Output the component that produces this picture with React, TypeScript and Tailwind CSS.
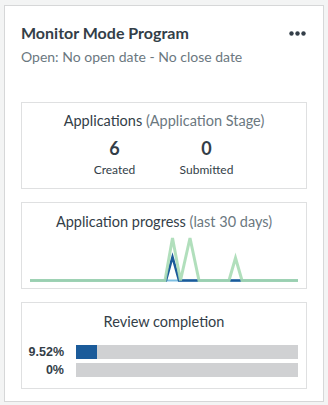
import React from 'react';

const font = { fontFamily: 'Lato, "Open Sans", sans-serif' };

const Dots = () => (
  <svg width="17" height="5" viewBox="0 0 17 5" fill="#333e48">
    <circle cx="2.5" cy="2.5" r="2.2" />
    <circle cx="8.5" cy="2.5" r="2.2" />
    <circle cx="14.5" cy="2.5" r="2.2" />
  </svg>
);

const ProgressChart = () => (
  <svg width="268" height="47" viewBox="0 0 268 47" fill="none">
    <line x1="0" y1="44.5" x2="268" y2="44.5" stroke="#7ebfe2" strokeWidth="2" />
    <polyline
      points="0,44.5 136,44.5 142.5,21 149,44.5 268,44.5"
      stroke="#1b5b9a"
      strokeWidth="2.5"
      strokeLinejoin="miter"
    />
    <polyline
      points="0,44.5 135,44.5 142.5,2 150.5,44.5 160,2 169,44.5 199,44.5 205.5,22 212,44.5 268,44.5"
      stroke="#a8dcb5"
      strokeOpacity="0.9"
      strokeWidth="3"
      strokeLinejoin="miter"
    />
  </svg>
);

const Bar = ({ label, pct }: { label: string; pct: number }) => (
  <div className="flex items-center gap-[12px]">
    <span
      className="w-[42px] text-right text-[12.5px] font-bold leading-none text-[#333e48]"
      style={{ fontFamily: '"Liberation Sans", Arial, sans-serif' }}
    >
      {label}
    </span>
    <div className="h-[14px] flex-1 bg-[#d0d1d3]">
      <div className="h-full bg-[#1b5b9a]" style={{ width: `${pct}%` }} />
    </div>
  </div>
);

export default function App() {
  return (
    <div className="min-h-[405px] bg-[#f3f4f4] pl-[4px] pt-[5px]" style={font}>
      <div className="w-[320px] h-[397px] border border-[#d6d7d8] bg-white px-[16px] pt-[17px]">
        <div className="flex items-start justify-between">
          <h1 className="text-[16px] font-bold leading-[20px] text-[#333e48]">Monitor Mode Program</h1>
          <div className="pt-[8px] pr-[1px]">
            <Dots />
          </div>
        </div>
        <p className="mt-[5px] text-[14px] leading-[18px] text-[#6b787f]">Open: No open date - No close date</p>

        <div className="mt-[36px] flex flex-col gap-[13px]">
          <div className="h-[87px] border border-[#dfe0e1] pt-[9px] text-center">
            <p className="text-[14.5px] leading-[18px] text-[#333e48]">
              Applications <span className="text-[#6b787f]">(Application Stage)</span>
            </p>
            <div className="mt-[8px] flex justify-center gap-[36px] pr-[7px]">
              <div className="flex w-[56px] flex-col items-center">
                <span className="text-[18px] font-bold leading-[20px] text-[#333e48]">6</span>
                <span className="mt-[5px] text-[12px] leading-[14px] text-[#333e48]">Created</span>
              </div>
              <div className="flex w-[56px] flex-col items-center">
                <span className="text-[18px] font-bold leading-[20px] text-[#333e48]">0</span>
                <span className="mt-[5px] text-[12px] leading-[14px] text-[#333e48]">Submitted</span>
              </div>
            </div>
          </div>

          <div className="h-[87px] border border-[#dfe0e1] pt-[10px]">
            <p className="text-center text-[14.5px] leading-[18px] text-[#333e48]">
              Application progress <span className="text-[#6b787f]">(last 30 days)</span>
            </p>
            <div className="mt-[5px] pl-[8px]">
              <ProgressChart />
            </div>
          </div>

          <div className="h-[87px] border border-[#dfe0e1] pt-[10px]">
            <p className="text-center text-[14.5px] leading-[18px] text-[#333e48]">Review completion</p>
            <div className="mt-[14px] flex flex-col gap-[4px] pr-[8px]">
              <Bar label="9.52%" pct={9.52} />
              <Bar label="0%" pct={0} />
            </div>
          </div>
        </div>
      </div>
    </div>
  );
}
